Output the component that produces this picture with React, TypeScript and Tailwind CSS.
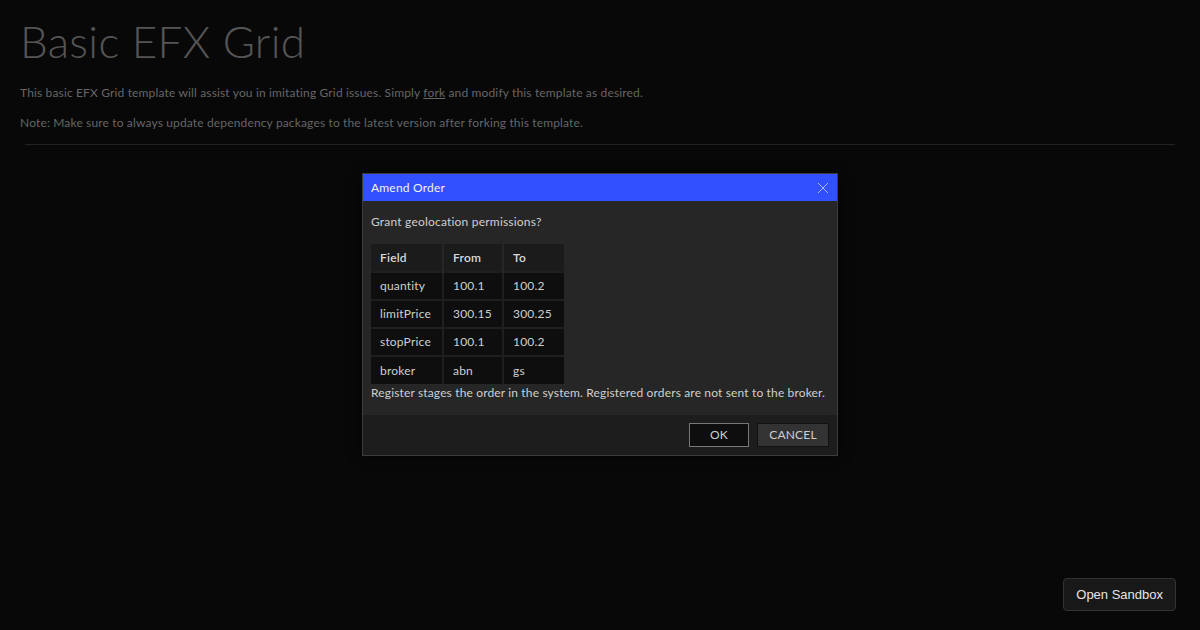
const rows = [
  { field: 'quantity', from: '100.1', to: '100.2' },
  { field: 'limitPrice', from: '300.15', to: '300.25' },
  { field: 'stopPrice', from: '100.1', to: '100.2' },
  { field: 'broker', from: 'abn', to: 'gs' },
];

function AmendDialog() {
  return (
    <div className="w-[476px] border border-[#3c3c3c] bg-[#262626] text-[12px] tracking-[0.2px] text-[#cfcfcf] shadow-[0_0_12px_rgba(0,0,0,0.6)]">
      <div className="flex h-[27px] items-center justify-between bg-[#3350ff] pl-[8px] pr-[8px] text-[#f2f2f2]">
        <span>Amend Order</span>
        <svg width="12" height="12" viewBox="0 0 12 12" className="text-[#a9b4ff]">
          <path d="M1 1L11 11M11 1L1 11" stroke="currentColor" strokeWidth="1" />
        </svg>
      </div>
      <div className="px-[8px] pt-[13px] pb-[14px]">
        <p className="leading-[16px]">Grant geolocation permissions?</p>
        <table className="mt-[14px] border-collapse">
          <thead>
            <tr className="h-[28px] bg-[#1b1b1b] text-left font-semibold text-[#d8d8d8]">
              <th className="w-[72px] border-r-2 border-[#262626] pl-[9px] font-semibold">Field</th>
              <th className="w-[60px] border-r-2 border-[#262626] pl-[9px] font-semibold">From</th>
              <th className="w-[61px] pl-[9px] font-semibold">To</th>
            </tr>
          </thead>
          <tbody>
            {rows.map((r) => (
              <tr key={r.field} className="h-[28px] border-t-2 border-[#1f1f1f] bg-[#0e0e0e]">
                <td className="border-r-2 border-[#1f1f1f] pl-[9px]">{r.field}</td>
                <td className="border-r-2 border-[#1f1f1f] pl-[9px]">{r.from}</td>
                <td className="pl-[9px]">{r.to}</td>
              </tr>
            ))}
          </tbody>
        </table>
        <p className="mt-[1px] whitespace-nowrap leading-[16px] tracking-[0.15px]">Register stages the order in the system. Registered orders are not sent to the broker.</p>
      </div>
      <div className="flex h-[40px] items-center justify-end gap-[8px] bg-[#1d1d1d] pr-[8px]">
        <button className="h-[24px] w-[60px] border border-[#777] bg-[#0e0e0e] text-[#cfcfcf]">OK</button>
        <button className="h-[24px] w-[72px] border border-[#111] bg-[#333] text-[#cfcfcf]">CANCEL</button>
      </div>
    </div>
  );
}

export default function App() {
  return (
    <div className="relative h-[630px] w-[1200px] overflow-hidden bg-[#080808] font-['Lato','Noto_Sans',sans-serif]">
      <div className="px-[20px] pt-[13px]">
        <h1 className="text-[44px] leading-[56px] font-light tracking-[0.3px] text-[#555]">Basic EFX Grid</h1>
        <p className="mt-[16px] text-[12px] leading-[16px] tracking-[0.15px] text-[#666]">
          This basic EFX Grid template will assist you in imitating Grid issues. Simply <span className="underline">fork</span> and modify this template as desired.
        </p>
        <p className="mt-[14px] text-[12px] leading-[16px] tracking-[0.15px] text-[#666]">
          Note: Make sure to always update dependency packages to the latest version after forking this template.
        </p>
      </div>
      <div className="mx-[25px] mt-[13px] h-px bg-[#222]" />
      <div className="mt-[28px] flex justify-center">
        <AmendDialog />
      </div>
      <button className="absolute right-[24px] bottom-[19px] h-[33px] rounded-[4px] border border-[#333] bg-[#181818] px-[12px] font-['Liberation_Sans',sans-serif] text-[13px] text-[#e6e6e6]">
        Open Sandbox
      </button>
    </div>
  );
}
